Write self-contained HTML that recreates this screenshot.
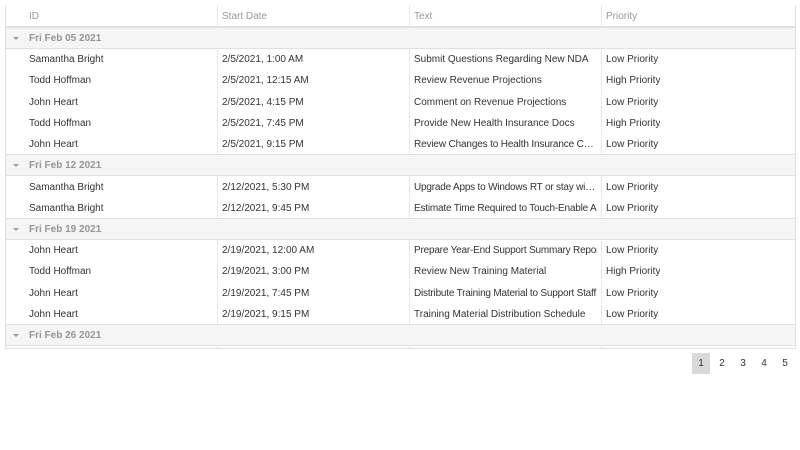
<!DOCTYPE html><html><head><style>
*{margin:0;padding:0;box-sizing:border-box}
body{width:800px;height:450px;background:#fff;font-family:"Liberation Sans",sans-serif;font-size:10px;color:#333;position:relative;overflow:hidden}
.g{position:absolute;left:5px;top:5px;width:791px;height:344px;border:1px solid #e0e0e0;border-top:none;overflow:hidden}
.r{position:absolute;left:0;width:789px;height:21px}
.r span{position:absolute;top:1px;line-height:21px;white-space:nowrap;overflow:hidden;text-overflow:ellipsis}
.h{color:#999;border-bottom:1px solid #e0e0e0;height:22px}
.h span{line-height:22px}
.grp{background:#f5f5f5;border-bottom:1px solid #e0e0e0;border-top:1px solid #e0e0e0;color:#959595;font-weight:bold}
.c1{left:23px;width:188px}.c2{left:216px;width:186px}.c3{left:408px;width:183px}.c4{left:600px}
.vl{position:absolute;top:0;width:1px;background:#e8e8e8}
.ar{position:absolute;left:7px;top:9px;width:0;height:0;border-left:3px solid transparent;border-right:3px solid transparent;border-top:3px solid #999}
.pg{position:absolute;top:353px;height:21px;width:18px;line-height:21px;text-align:center;color:#333;font-size:10px}
</style></head><body>
<div class="g">
<div class="r h" style="top:0"><span class="c1">ID</span><span class="c2">Start Date</span><span class="c3">Text</span><span class="c4">Priority</span></div>
<div class="vl" style="left:211px;height:22px"></div><div class="vl" style="left:403px;height:22px"></div><div class="vl" style="left:595px;height:22px"></div>

<div class="r grp" style="top:22px;height:22px"><i class="ar"></i><span class="c1" style="line-height:20px">Fri Feb 05 2021</span></div>
<div class="vl" style="left:211px;top:43px;height:106px"></div><div class="vl" style="left:403px;top:43px;height:106px"></div><div class="vl" style="left:595px;top:43px;height:106px"></div>
<div class="r" style="top:43px"><span class="c1">Samantha Bright</span><span class="c2">2/5/2021, 1:00 AM</span><span class="c3">Submit Questions Regarding New NDA</span><span class="c4">Low Priority</span></div>
<div class="r" style="top:64px"><span class="c1">Todd Hoffman</span><span class="c2">2/5/2021, 12:15 AM</span><span class="c3">Review Revenue Projections</span><span class="c4">High Priority</span></div>
<div class="r" style="top:85.5px"><span class="c1">John Heart</span><span class="c2">2/5/2021, 4:15 PM</span><span class="c3">Comment on Revenue Projections</span><span class="c4">Low Priority</span></div>
<div class="r" style="top:107px"><span class="c1">Todd Hoffman</span><span class="c2">2/5/2021, 7:45 PM</span><span class="c3">Provide New Health Insurance Docs</span><span class="c4">High Priority</span></div>
<div class="r" style="top:128px"><span class="c1">John Heart</span><span class="c2">2/5/2021, 9:15 PM</span><span class="c3" style="letter-spacing:-0.15px">Review Changes to Health Insurance Coverage</span><span class="c4">Low Priority</span></div>

<div class="r grp" style="top:149px;height:22px"><i class="ar"></i><span class="c1" style="line-height:20px">Fri Feb 12 2021</span></div>
<div class="vl" style="left:211px;top:171px;height:42px"></div><div class="vl" style="left:403px;top:171px;height:42px"></div><div class="vl" style="left:595px;top:171px;height:42px"></div>
<div class="r" style="top:171px"><span class="c1">Samantha Bright</span><span class="c2">2/12/2021, 5:30 PM</span><span class="c3" style="letter-spacing:-0.2px">Upgrade Apps to Windows RT or stay with WinForms</span><span class="c4">Low Priority</span></div>
<div class="r" style="top:192px"><span class="c1">Samantha Bright</span><span class="c2">2/12/2021, 9:45 PM</span><span class="c3" style="letter-spacing:-0.2px;text-overflow:clip">Estimate Time Required to Touch-Enable Apps</span><span class="c4">Low Priority</span></div>

<div class="r grp" style="top:213px;height:22px"><i class="ar"></i><span class="c1" style="line-height:20px">Fri Feb 19 2021</span></div>
<div class="vl" style="left:211px;top:234px;height:85px"></div><div class="vl" style="left:403px;top:234px;height:85px"></div><div class="vl" style="left:595px;top:234px;height:85px"></div>
<div class="r" style="top:234px"><span class="c1">John Heart</span><span class="c2">2/19/2021, 12:00 AM</span><span class="c3" style="letter-spacing:-0.2px;text-overflow:clip">Prepare Year-End Support Summary Report</span><span class="c4">Low Priority</span></div>
<div class="r" style="top:255px"><span class="c1">Todd Hoffman</span><span class="c2">2/19/2021, 3:00 PM</span><span class="c3">Review New Training Material</span><span class="c4">High Priority</span></div>
<div class="r" style="top:277px"><span class="c1">John Heart</span><span class="c2">2/19/2021, 7:45 PM</span><span class="c3" style="letter-spacing:-0.2px;text-overflow:clip">Distribute Training Material to Support Staff</span><span class="c4">Low Priority</span></div>
<div class="r" style="top:298px"><span class="c1">John Heart</span><span class="c2">2/19/2021, 9:15 PM</span><span class="c3">Training Material Distribution Schedule</span><span class="c4">Low Priority</span></div>

<div class="r grp" style="top:319px;height:22px"><i class="ar"></i><span class="c1" style="line-height:20px">Fri Feb 26 2021</span></div>
<div class="vl" style="left:211px;top:341px;height:4px"></div><div class="vl" style="left:403px;top:341px;height:4px"></div><div class="vl" style="left:595px;top:341px;height:4px"></div>
</div>
<div class="pg" style="left:692px;background:#d9d9d9">1</div>
<div class="pg" style="left:713px">2</div>
<div class="pg" style="left:734px">3</div>
<div class="pg" style="left:755px">4</div>
<div class="pg" style="left:776px">5</div>
</body></html>
